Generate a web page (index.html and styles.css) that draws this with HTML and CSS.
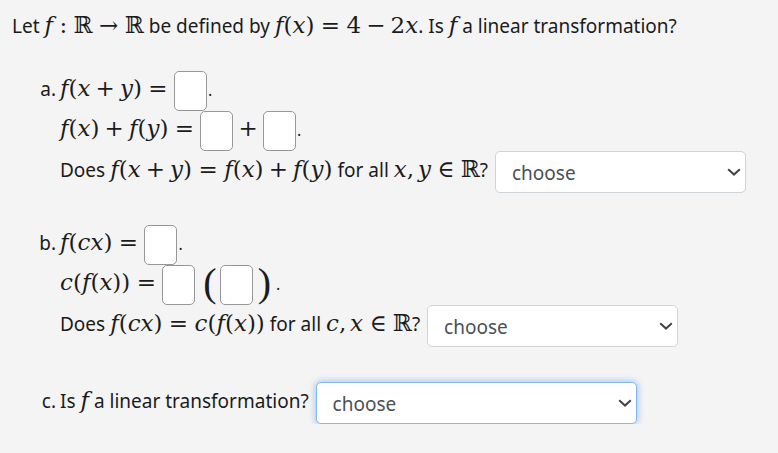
FILE: index.html
```html
<!DOCTYPE html>
<html lang="en">
<head>
<meta charset="utf-8">
<title>Linear transformation</title>
<link rel="stylesheet" href="styles.css">
</head>
<body>
<div class="page">
  <p class="title">Let <span class="m"><i>f</i><span class="rel">:</span><span class="bb">ℝ</span><span class="rel">→</span><span class="bb">ℝ</span></span> be defined by <span class="m"><i>f</i>(<i>x</i>)<span class="rel">=</span>4<span class="bin">−</span>2<i>x</i></span>. Is <span class="m"><i>f</i></span> a linear transformation?</p>

  <div class="part">
    <div class="row"><span class="lbl">a.</span><span class="m"><i>f</i>(<i>x</i><span class="bin">+</span><i>y</i>)<span class="rel">=</span></span><span class="box"></span><span class="dot">.</span></div>
    <div class="row"><span class="m"><i>f</i>(<i>x</i>)<span class="bin">+</span><i>f</i>(<i>y</i>)<span class="rel">=</span></span><span class="box"></span><span class="m"><span class="bin">+</span></span><span class="box"></span><span class="dot">.</span></div>
    <div class="row">Does <span class="m"><i>f</i>(<i>x</i><span class="bin">+</span><i>y</i>)<span class="rel">=</span><i>f</i>(<i>x</i>)<span class="bin">+</span><i>f</i>(<i>y</i>)</span> for all <span class="m"><i>x</i>,<span class="thin"></span><i>y</i><span class="rel">∈</span><span class="bb">ℝ</span></span>? <span class="sel"><span class="sel-text">choose</span><svg class="chev" width="14" height="8" viewBox="0 0 14 8"><path d="M1.2 1.2 L7 6.6 L12.8 1.2" fill="none" stroke="#444" stroke-width="2"/></svg></span></div>
  </div>

  <div class="part">
    <div class="row"><span class="lbl">b.</span><span class="m"><i>f</i>(<i>c</i><i>x</i>)<span class="rel">=</span></span><span class="box"></span><span class="dot">.</span></div>
    <div class="row"><span class="m"><i>c</i>(<i>f</i>(<i>x</i>))<span class="rel">=</span></span><span class="box"></span><span class="m big">(</span><span class="box"></span><span class="m big">)</span><span class="dot">.</span></div>
    <div class="row">Does <span class="m"><i>f</i>(<i>c</i><i>x</i>)<span class="rel">=</span><i>c</i>(<i>f</i>(<i>x</i>))</span> for all <span class="m"><i>c</i>,<span class="thin"></span><i>x</i><span class="rel">∈</span><span class="bb">ℝ</span></span>? <span class="sel"><span class="sel-text">choose</span><svg class="chev" width="14" height="8" viewBox="0 0 14 8"><path d="M1.2 1.2 L7 6.6 L12.8 1.2" fill="none" stroke="#444" stroke-width="2"/></svg></span></div>
  </div>

  <div class="part last">
    <div class="row"><span class="lbl">c.</span>Is <span class="m"><i>f</i></span> a linear transformation? <span class="sel focus"><span class="sel-text">choose</span><svg class="chev" width="14" height="8" viewBox="0 0 14 8"><path d="M1.2 1.2 L7 6.6 L12.8 1.2" fill="none" stroke="#444" stroke-width="2"/></svg></span></div>
  </div>
</div>
</body>
</html>
```

FILE: styles.css
```css
html, body {
  margin: 0;
  padding: 0;
  background: #f4f4f4;
}

body {
  font-family: "Noto Sans", "Open Sans", sans-serif;
  font-size: 19px;
  color: #1b1b1b;
}

.page {
  padding: 10px 0 0 12px;
}

.title {
  margin: 0;
  line-height: 30px;
}

.m {
  font-family: "DejaVu Serif", "Liberation Serif", serif;
  font-size: 23px;
  white-space: nowrap;
}

.m i {
  font-style: italic;
}

.bb {
  font-family: "DejaVu Serif", serif;
}

.rel {
  margin: 0 0.2778em;
}

.bin {
  margin: 0 0.2222em;
}

.thin {
  display: inline-block;
  width: 0.1667em;
}

.part {
  padding-left: 48px;
  margin-top: 32px;
}

.part:first-of-type {
  margin-top: 30px;
}

.part.last {
  margin-top: 35px;
}

.row {
  white-space: nowrap;
}

.lbl {
  display: inline-block;
  width: 24px;
  margin-left: -24px;
  padding-right: 4px;
  box-sizing: border-box;
  text-align: right;
  font-family: "Noto Sans", "Open Sans", sans-serif;
  font-size: 19px;
}

.box {
  display: inline-block;
  box-sizing: border-box;
  width: 33px;
  height: 40px;
  border: 1px solid #979797;
  border-radius: 5px;
  background: #fff;
  vertical-align: middle;
}

.dot {
  margin-left: 1px;
  font-size: 16px;
}

.big {
  font-family: "Liberation Serif", serif;
  font-size: 40px;
  line-height: 1;
  vertical-align: middle;
  margin: 0 3px 0 8px;
  position: relative;
  top: -2px;
}

.big + .box + .big {
  margin: 0 4px 0 5px;
}

.sel {
  display: inline-flex;
  align-items: center;
  justify-content: space-between;
  box-sizing: border-box;
  width: 251px;
  height: 42px;
  padding: 0 4px 0 16px;
  border: 1px solid #cfd4d9;
  border-radius: 5px;
  background: #fff;
  vertical-align: middle;
  color: #4a5056;
  margin-left: 2px;
}

.sel-text {
  position: relative;
  top: 1px;
}

.chev {
  display: block;
}

.sel.focus {
  width: 321px;
  border-color: #85b8ec;
  box-shadow: 0 0 6px 1px rgba(70, 140, 230, 0.45);
}
```
